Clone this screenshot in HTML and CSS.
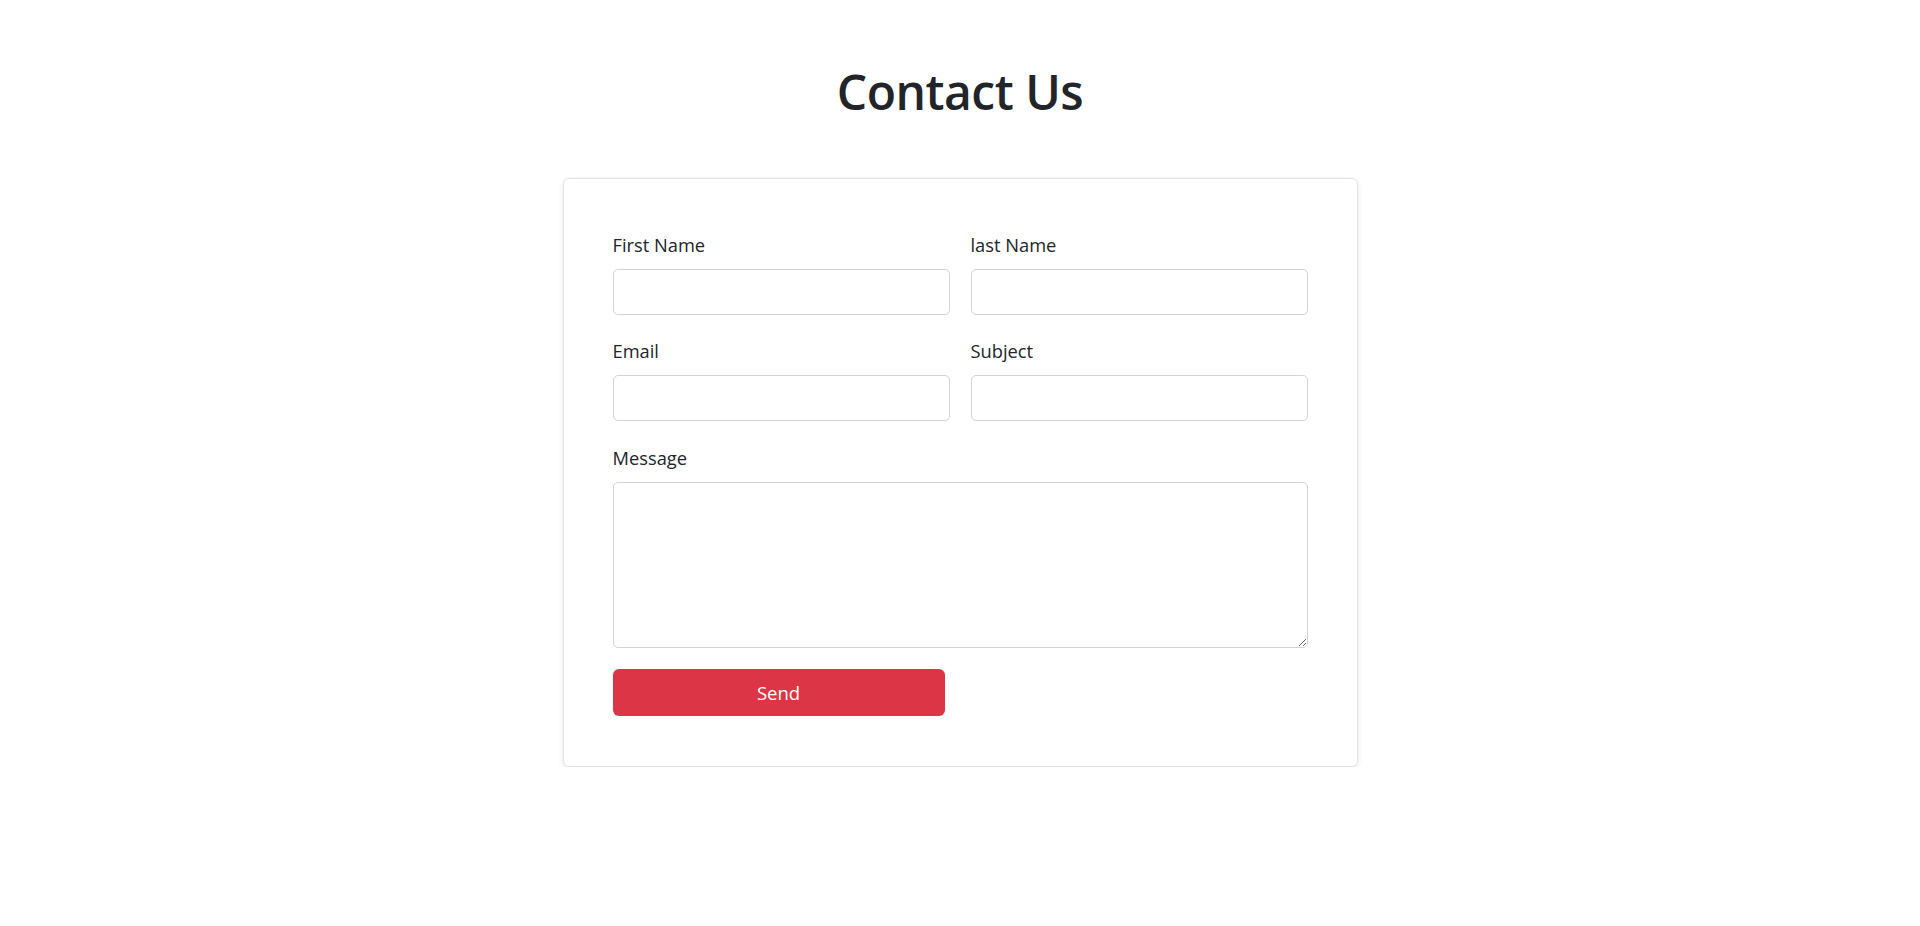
FILE: index.html
```html
<!DOCTYPE html>
<html lang="en">
<head>
    <meta charset="UTF-8">
    <meta name="viewport" content="width=device-width, initial-scale=1.0">
    <title>Contact Us</title>
    <link rel="stylesheet" href="styles.css">
</head>
<body>
    <h1 class="page-title">Contact Us</h1>

    <div class="contact-card">
        <form class="contact-form" onsubmit="return false">
            <div class="field">
                <label for="firstName">First Name</label>
                <input type="text" id="firstName">
            </div>
            <div class="field">
                <label for="lastName">last Name</label>
                <input type="text" id="lastName">
            </div>
            <div class="field">
                <label for="email">Email</label>
                <input type="email" id="email">
            </div>
            <div class="field">
                <label for="subject">Subject</label>
                <input type="text" id="subject">
            </div>
            <div class="field full">
                <label for="message">Message</label>
                <textarea id="message"></textarea>
            </div>
            <div class="full">
                <button type="submit" class="send-button">Send</button>
            </div>
        </form>
    </div>
</body>
</html>
```

FILE: styles.css
```css
* {
    margin: 0;
    padding: 0;
    box-sizing: border-box;
}

body {
    display: flex;
    flex-direction: column;
    align-items: center;
    background: #fff;
    color: #212529;
    font-family: "Open Sans", "Noto Sans", sans-serif;
}

.page-title {
    margin-top: 63px;
    font-size: 48px;
    font-weight: 600;
    line-height: 1.2;
    letter-spacing: -0.5px;
}

/* card with the form */
.contact-card {
    width: 795px;
    margin-top: 57px;
    padding: 51px 49px 50px;
    background: #fff;
    border: 1px solid #e3e3e3;
    border-radius: 6px;
    box-shadow: 0 2px 6px rgba(0, 0, 0, 0.09);
}

.contact-form {
    display: grid;
    grid-template-columns: 1fr 1fr;
    column-gap: 21px;
}

.field {
    margin-bottom: 21.5px;
}

.field.full {
    margin-bottom: 21px;
}

.full {
    grid-column: 1 / -1;
}

.field label {
    display: block;
    font-size: 18.3px;
    line-height: 29px;
    margin-bottom: 10px;
}

.field input,
.field textarea {
    display: block;
    width: 100%;
    height: 46px;
    padding: 7px 14px;
    font-family: inherit;
    font-size: 19px;
    color: #212529;
    border: 1px solid #ced4da;
    border-radius: 5px;
    outline: none;
}

.field textarea {
    height: 166px;
}

.send-button {
    display: block;
    width: 332px;
    height: 47px;
    background: #dc3545;
    color: #fff;
    border: none;
    border-radius: 6px;
    font-family: inherit;
    font-size: 18.5px;
    cursor: pointer;
}

.send-button:hover {
    background: #bb2d3b;
}
```
